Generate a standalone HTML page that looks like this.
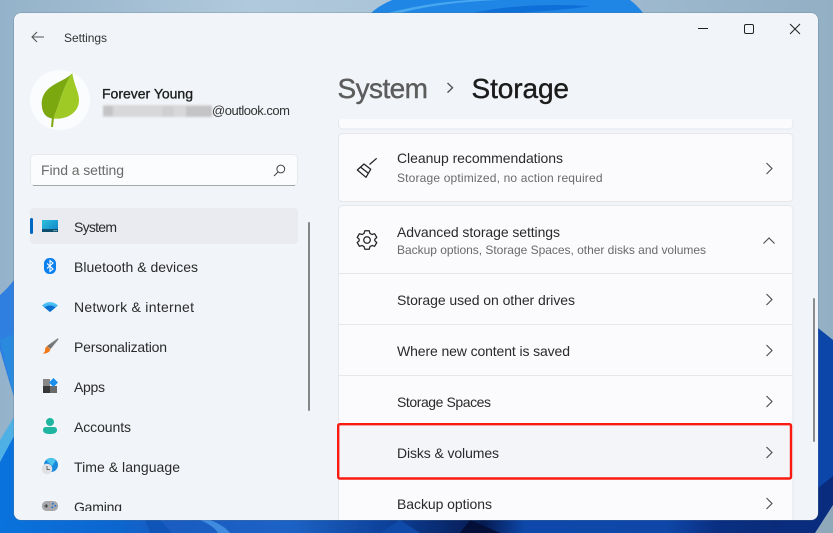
<!DOCTYPE html>
<html><head><meta charset="utf-8"><title>Settings</title>
<style>
html,body{margin:0;padding:0;width:833px;height:533px;overflow:hidden;background:#a5bfd3}
svg{display:block;position:absolute;left:0;top:0}
text{font-family:"Liberation Sans",sans-serif;fill:#2a2a2a;font-size:14px}
.s{font-size:12px;fill:#6a6a6a}
.ic{fill:none;stroke:#222;stroke-width:1.25}
.ch{fill:none;stroke:#4a4a4a;stroke-width:1.1}
</style></head><body>
<svg width="833" height="533" viewBox="0 0 833 533" xmlns="http://www.w3.org/2000/svg">
<defs>
<linearGradient id="bg" x1="0" x2="1" y1="0" y2="0"><stop offset="0" stop-color="#94b2c9"/><stop offset=".3" stop-color="#b1c9dc"/><stop offset=".6" stop-color="#a5c0d5"/><stop offset="1" stop-color="#93afc4"/></linearGradient>
<linearGradient id="bot" x1="0" x2="1" y1="0" y2="0">
<stop offset="0" stop-color="#0a72dc"/><stop offset=".14" stop-color="#0c66cf"/><stop offset=".2" stop-color="#1a5cc0"/><stop offset=".35" stop-color="#1c62c4"/><stop offset=".47" stop-color="#0c3f98"/><stop offset=".58" stop-color="#061a50"/><stop offset=".63" stop-color="#0d48aa"/><stop offset=".8" stop-color="#0e47a8"/><stop offset=".86" stop-color="#0a2f82"/><stop offset=".95" stop-color="#0a2a78"/><stop offset="1" stop-color="#0a2a78"/></linearGradient>
<linearGradient id="sysg" x1="0" x2="1" y1="0" y2="1"><stop offset="0" stop-color="#2cc0dc"/><stop offset="1" stop-color="#1080c8"/></linearGradient>
<linearGradient id="wifi1" x1="0" x2="0" y1="0" y2="1"><stop offset="0" stop-color="#58c8f8"/><stop offset="1" stop-color="#1e9ae8"/></linearGradient>
<linearGradient id="hnd" x1="1" x2="0" y1="0" y2="1"><stop offset="0" stop-color="#8a8a8a"/><stop offset="1" stop-color="#6a6a6a"/></linearGradient>
<filter id="bl" x="-10%" y="-30%" width="120%" height="160%"><feGaussianBlur stdDeviation="1"/></filter>
<clipPath id="nav"><rect x="14" y="60" width="300" height="451"/></clipPath>
<clipPath id="cards"><rect x="330" y="119" width="470" height="401"/></clipPath>
</defs>

<!-- wallpaper -->
<rect width="833" height="533" fill="url(#bg)"/>
<path d="M370 14Q378 6 392 0H630Q638 6 644 14Z" fill="#1f86e6"/>
<path d="M396 14Q440 2 500 0L470 0Q425 3 384 14Z" fill="#4aa8ee"/>
<path d="M468 14Q520 2 590 6Q570 10 500 14Z" fill="#0f6fd8"/>
<path d="M0 295Q8 288 14 280V397Q8 378 0 350Z" fill="#2f7fe0"/>
<path d="M0 340L14 334V397Z" fill="#2a8ade"/>
<path d="M0 440L14 417V520H0Z" fill="#4fb0e6"/>
<path d="M0 462L14 436V533H0Z" fill="#0a72dc"/>
<rect y="515" width="833" height="18" fill="url(#bot)"/>
<path d="M818 328L833 340V510L815 533H790L818 515Z" fill="#0b46a8"/>
<path d="M818 488L833 476V505L815 533H770Z" fill="#0a2c7e"/>
<path d="M833 505V533H815Z" fill="#8fa8ba"/>
<path d="M210 520Q225 526 230 533H218Q214 526 200 520Z" fill="#3f8be0"/>
<path d="M160 520L172 533H150L145 520Z" fill="#0f55b8"/>
<path d="M400 520L420 533H380Z" fill="#0f4aa8"/>
<path d="M470 520L500 533H460Z" fill="#040f38"/>

<!-- window -->
<rect x="13.5" y="12.5" width="805" height="508" rx="7.5" fill="#5f7486" opacity=".55"/>
<rect x="14" y="13" width="804" height="507" rx="7" fill="#f1f4f9"/>

<!-- title bar -->
<path d="M44 37H32.5M37 32L32 37L37 42" fill="none" stroke="#555" stroke-width="1.1"/>
<text x="64" y="42" style="font-size:12px;fill:#333" textLength="43" lengthAdjust="spacing">Settings</text>
<path d="M698 28.5H708" stroke="#222" stroke-width="1"/>
<rect x="744.5" y="24.5" width="9" height="9" rx="1.5" fill="none" stroke="#222" stroke-width="1"/>
<path d="M790 24L800 34M800 24L790 34" stroke="#222" stroke-width="1"/>

<!-- profile -->
<circle cx="60" cy="100" r="30" fill="#fbfcfe"/>
<path d="M72.3 73C64 83 42 84 41.700 104C42 113 46 118 53 118.500C58 110 62 88 72.300 73Z" fill="#7ba80f"/>
<path d="M72.300 73C62 88 58 110 53 118.500C68 120 79 112 79 100C79 92 74 85 72.300 73Z" fill="#9fca25"/>
<path d="M53 117L52 127" stroke="#7ba80f" stroke-width="2" fill="none"/>
<text x="102" y="98.500" textLength="91" lengthAdjust="spacing" style="stroke:#1f1f1f;stroke-width:.35;fill:#1f1f1f">Forever Young</text>
<g filter="url(#bl)">
<rect x="103" y="105" width="109" height="12" fill="#d8d8da"/>
<rect x="103" y="106" width="10" height="10" fill="#c4c4c6"/>
<rect x="162" y="106" width="12" height="11" fill="#cfcfd1"/>
<rect x="186" y="106" width="26" height="11" fill="#c4c4c6"/>
</g>
<text x="212" y="115" style="font-size:13px;fill:#333" textLength="78" lengthAdjust="spacing">@outlook.com</text>

<!-- search -->
<rect x="30.500" y="154.500" width="267" height="31" rx="4" fill="#fbfcfd" stroke="#e6e8ec"/>
<path d="M33 185.500H295" stroke="#a4a6aa" stroke-width="1"/>
<text x="41" y="175" style="fill:#6a6a6a" textLength="83" lengthAdjust="spacing">Find a setting</text>
<circle cx="280.800" cy="169" r="3.900" fill="none" stroke="#444" stroke-width="1"/>
<path d="M278 172L274 176" stroke="#444" stroke-width="1.100"/>

<!-- nav -->
<rect x="30" y="208" width="268" height="36" rx="4" fill="#e9ebf0"/>
<rect x="30" y="218" width="3" height="16" rx="1.500" fill="#0067c0"/>
<g clip-path="url(#nav)">
<text x="74" y="232" textLength="43" lengthAdjust="spacing">System</text>
<text x="74" y="272" textLength="124" lengthAdjust="spacing">Bluetooth &amp; devices</text>
<text x="74" y="312" textLength="120" lengthAdjust="spacing">Network &amp; internet</text>
<text x="74" y="352" textLength="93" lengthAdjust="spacing">Personalization</text>
<text x="74" y="392" textLength="31" lengthAdjust="spacing">Apps</text>
<text x="74" y="432" textLength="57" lengthAdjust="spacing">Accounts</text>
<text x="74" y="472" textLength="106" lengthAdjust="spacing">Time &amp; language</text>
<text x="74" y="512" textLength="48" lengthAdjust="spacing">Gaming</text>

<!-- system -->
<rect x="42" y="220" width="16" height="12" fill="url(#sysg)"/>
<rect x="42" y="229" width="16" height="3" fill="#0e4f70"/>
<rect x="53.500" y="230" width="1.200" height="1.200" fill="#9cc"/><rect x="55.500" y="230" width="1.200" height="1.200" fill="#9cc"/>
<!-- bluetooth -->
<rect x="44" y="258" width="12" height="16" rx="5.500" fill="#0a80ee"/>
<path d="M47 263.500L53 269L50 271.500V260.500L53 263L47 268.500" fill="none" stroke="#fff" stroke-width="1.100"/>
<!-- wifi -->
<path d="M42 305.500Q50 298.500 58 305.500L50 312Z" fill="url(#wifi1)"/>
<path d="M44.500 307.500Q50 303.500 55.500 307.500L50 312Z" fill="#0c6fd0"/>
<!-- brush -->
<path d="M58 338L58.500 339.500L50.500 349L47 346Z" fill="url(#hnd)"/>
<path d="M47 346L50.500 349.500Q49 353.500 43 353.800Q46 350.500 45 348.500Z" fill="#f07818"/>
<!-- apps -->
<rect x="43" y="379" width="7" height="7" fill="#888"/>
<rect x="43" y="386" width="7" height="7" fill="#383838"/>
<rect x="50" y="386" width="7" height="7" fill="#6a6a6a"/>
<path d="M53.500 378L58 382.500L53.500 387L49 382.500Z" fill="#1a8fee"/>
<!-- accounts -->
<circle cx="50" cy="422" r="4" fill="#1fb5a0"/>
<path d="M43 430Q43 427 46 427H54Q57 427 57 430Q57 434 50 434Q43 434 43 430Z" fill="#1fb5a0"/>
<!-- time -->
<circle cx="51" cy="465" r="7" fill="#1a8ade"/>
<path d="M46 460Q51 456 56 460L52 466Z" fill="#4cc4ec"/>
<circle cx="47" cy="469" r="5.300" fill="#dfe1e4"/>
<path d="M47 466V469.500H50" fill="none" stroke="#444" stroke-width=".8"/>
<!-- gaming -->
<rect x="42" y="501" width="16" height="10" rx="4.500" fill="#a8a8ac"/>
<path d="M44.500 506H48M46.200 504.200V507.800" stroke="#333" stroke-width="1"/>
<rect x="52" y="503" width="1.600" height="1.600" fill="#1a6fd8"/><rect x="54.500" y="505" width="1.600" height="1.600" fill="#1a6fd8"/><rect x="51.500" y="506.500" width="1.600" height="1.600" fill="#1a6fd8"/>
</g>
<rect x="308" y="222" width="2" height="189" rx="1" fill="#868686"/>

<!-- title -->
<text x="337.500" y="98" style="font-size:28px;fill:#5c5c5c;stroke:#5c5c5c;stroke-width:.4" textLength="90.500" lengthAdjust="spacing">System</text>
<path d="M447.500 83L452.500 87.800L447.500 92.600" fill="none" stroke="#555" stroke-width="1.400"/>
<text x="471.500" y="98" style="font-size:28px;fill:#1c1c1c;stroke:#1c1c1c;stroke-width:.4" textLength="97.500" lengthAdjust="spacing">Storage</text>

<!-- cards -->
<g clip-path="url(#cards)">
<rect x="338.500" y="90" width="454.500" height="39" rx="4" fill="#fbfbfd" stroke="#e5e7eb"/>
<rect x="338.500" y="133.500" width="454.500" height="68" rx="4" fill="#fbfbfd" stroke="#e5e7eb"/>
<rect x="338.500" y="205.500" width="454.500" height="340" rx="4" fill="#fbfbfd" stroke="#e5e7eb"/>
<path d="M339 273.500H793M339 324.500H793M339 375.500H793" stroke="#e5e7eb" stroke-width="1"/>
<rect x="338" y="424" width="454" height="54" fill="#f4f5f9"/>

<!-- broom -->
<path d="M376.700 158.300L369.500 164.500M364 164L370.700 169.300L366 177.300L357.300 170ZM360.700 167.300L368.300 173.300" class="ic" stroke-linejoin="round"/>
<!-- gear -->
<g transform="translate(367 240)">
<circle r="3.300" class="ic"/>
<path d="M-2.200-9.200H2.200L3-6.600L5-5.500L7.600-6.300L9.800-2.500L7.800-.8V.8L9.800 2.500L7.600 6.300L5 5.500L3 6.600L2.200 9.200H-2.200L-3 6.600L-5 5.500L-7.600 6.300L-9.800 2.500L-7.800 .8V-.8L-9.800-2.500L-7.600-6.300L-5-5.500L-3-6.600Z" class="ic" stroke-linejoin="round"/>
</g>

<text x="397" y="163" textLength="166" lengthAdjust="spacing">Cleanup recommendations</text>
<text x="397" y="182" class="s" textLength="205.500" lengthAdjust="spacing">Storage optimized, no action required</text>
<text x="397" y="237" textLength="163" lengthAdjust="spacing">Advanced storage settings</text>
<text x="397" y="254" class="s" textLength="309" lengthAdjust="spacing">Backup options, Storage Spaces, other disks and volumes</text>
<text x="397" y="305" textLength="178" lengthAdjust="spacing">Storage used on other drives</text>
<text x="397" y="356" textLength="173" lengthAdjust="spacing">Where new content is saved</text>
<text x="397" y="407" textLength="94" lengthAdjust="spacing">Storage Spaces</text>
<text x="397" y="458" textLength="102" lengthAdjust="spacing">Disks &amp; volumes</text>
<text x="397" y="509" textLength="95" lengthAdjust="spacing">Backup options</text>

<path d="M766.500 163L772 168.500L766.500 174" class="ch"/>
<path d="M763.500 243.500L769 238L774.500 243.500" class="ch"/>
<path d="M766.500 294L772 299.500L766.500 305" class="ch"/>
<path d="M766.500 345L772 350.500L766.500 356" class="ch"/>
<path d="M766.500 396L772 401.500L766.500 407" class="ch"/>
<path d="M766.500 447L772 452.500L766.500 458" class="ch"/>
<path d="M766.500 498L772 503.500L766.500 509" class="ch"/>
</g>

<rect x="813" y="298" width="2" height="144" rx="1" fill="#8c8c8c"/>
<!-- highlight -->
<rect x="338.200" y="424.200" width="452.800" height="54.300" rx="1.500" fill="none" stroke="#fb1a12" stroke-width="2.400"/>
</svg>
</body></html>
